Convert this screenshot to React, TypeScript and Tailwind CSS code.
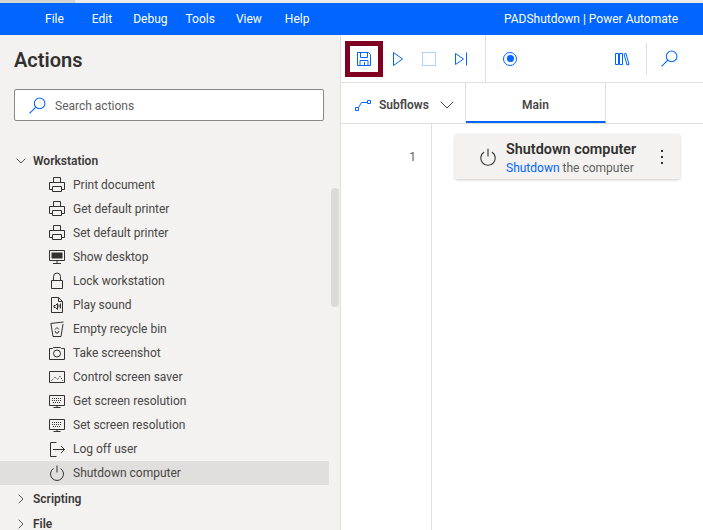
import { ReactNode } from "react";
import { ChevronDown, ChevronRight } from "lucide-react";

const Ic = ({ children }: { children: ReactNode }) => (
  <svg width="18" height="18" viewBox="0 0 18 18" fill="none" stroke="#323130" strokeWidth="1" className="shrink-0">
    {children}
  </svg>
);

const PrinterIcon = () => (
  <Ic>
    <path d="M5.500 6.500V1.500h7v5M4.500 13.500h-3v-7h15v7h-3" />
    <path d="M4.500 10.500h9v5h-9z" />
  </Ic>
);

const ScreenKeysIcon = () => (
  <Ic>
    <path d="M1.500 3.500h15v10h-15zM9 13.500v2M5.500 15.500h7" />
    <path d="M4 6.500h10M4 8.500h10M5 10.500h8" strokeDasharray="1 1" />
  </Ic>
);

const PowerIcon = ({ size = 18 }: { size?: number }) => (
  <svg width={size} height={size} viewBox="0 0 18 18" fill="none" stroke="#323130" strokeWidth="1" className="shrink-0">
    <path d="M5.500 4.500a6.500 6.500 0 1 0 7 0M9 1.500v7" />
  </svg>
);

const actions: { label: string; icon: ReactNode; active?: boolean }[] = [
  { label: "Print document", icon: <PrinterIcon /> },
  { label: "Get default printer", icon: <PrinterIcon /> },
  { label: "Set default printer", icon: <PrinterIcon /> },
  {
    label: "Show desktop",
    icon: (
      <Ic>
        <path d="M1.500 2.500h15v10h-15zM9 12.500v3M5 15.500h8" />
        <path d="M3.500 4.500h11v6h-11z" fill="#323130" stroke="none" />
      </Ic>
    ),
  },
  {
    label: "Lock workstation",
    icon: (
      <Ic>
        <path d="M3.500 8.500h11v8h-11zM5.500 8.500V4.500a3.500 3.500 0 0 1 7 0v4" />
      </Ic>
    ),
  },
  {
    label: "Play sound",
    icon: (
      <Ic>
        <path d="M3.500 1.500h7l4 4v11h-11zM10.500 1.500v4h4" />
        <path d="M6 9.500h1.500l2-2v6l-2-2H6zM11 8.500v3M12.500 7.500v5" />
      </Ic>
    ),
  },
  {
    label: "Empty recycle bin",
    icon: (
      <Ic>
        <path d="M2.500 3.500l13-1.500M3 4l2 12.500h8L15 4" />
        <path d="M7 9.500l2-2 2 2M7 11l1 2h2l1-2" />
      </Ic>
    ),
  },
  {
    label: "Take screenshot",
    icon: (
      <Ic>
        <path d="M1.500 4.500h3l1-1h7l1 1h3v11h-15z" />
        <circle cx="9" cy="9.500" r="3.500" />
      </Ic>
    ),
  },
  {
    label: "Control screen saver",
    icon: (
      <Ic>
        <path d="M1.500 3.500h15v11h-15z" />
        <path d="M3 13l4-4 2.500 2.500L12 8l3 5" strokeDasharray="1 1" />
      </Ic>
    ),
  },
  { label: "Get screen resolution", icon: <ScreenKeysIcon /> },
  { label: "Set screen resolution", icon: <ScreenKeysIcon /> },
  {
    label: "Log off user",
    icon: (
      <Ic>
        <path d="M8.500 2.500h-6v14h6M5 9.500h11.500M13 6l3.500 3.500L13 13" />
      </Ic>
    ),
  },
  { label: "Shutdown computer", icon: <PowerIcon />, active: true },
];

const Blue = ({ children, size = 16 }: { children: ReactNode; size?: number }) => (
  <svg width={size} height={size} viewBox="0 0 16 16" fill="none" stroke="#0066ff" strokeWidth="1" className="shrink-0">
    {children}
  </svg>
);

const Search = () => (
  <Blue size={17}>
    <circle cx="10" cy="6" r="5" />
    <path d="M6.500 9.500l-6 6" />
  </Blue>
);

export default function App() {
  return (
    <div className="w-[703px] h-[530px] overflow-hidden bg-white flex flex-col text-[#323130] font-['Roboto',sans-serif]">
      <div className="h-[3px] flex shrink-0">
        <div className="w-[75px] bg-[#d6d5d4]" />
        <div className="flex-1 bg-[#ebebeb]" />
      </div>
      <header className="h-[32px] shrink-0 bg-[#0066ff] text-white text-[12px] flex items-center justify-between pl-[45px] pr-[25px]">
        <nav className="flex gap-[21px]">
          <span className="mr-[7px]">File</span>
          <span>Edit</span>
          <span>Debug</span>
          <span className="-ml-[3px]">Tools</span>
          <span>View</span>
          <span className="ml-[2px]">Help</span>
        </nav>
        <span>PADShutdown | Power Automate</span>
      </header>

      <div className="flex-1 flex min-h-0">
        <aside className="w-[341px] shrink-0 bg-[#f3f2f1] border-r border-[#e1dfdd] pl-[14px] flex flex-col overflow-hidden relative">
          <h1 className="text-[20px] leading-[28px] font-semibold mt-[11px] shrink-0">Actions</h1>
          <div className="mt-[15px] w-[310px] h-[32px] shrink-0 bg-white border border-[#8a8886] rounded-[2px] flex items-center pl-[14px] gap-[9px]">
            <Search />
            <span className="text-[12px] text-[#605e5c] pt-[2px]">Search actions</span>
          </div>

          <div className="mt-[27px] -ml-[14px] text-[#484644] shrink-0">
            <div className="h-[25px] flex items-center pl-[13px] gap-[4px] text-[12px] font-semibold text-[#3b3a39]">
              <ChevronDown size={16} strokeWidth={1.3} />
              Workstation
            </div>
            <ul>
              {actions.map((a) => (
                <li
                  key={a.label}
                  className={`h-[24px] w-[329px] flex items-center pl-[48px] gap-[7px] text-[12px] ${a.active ? "bg-[#e1dfdd]" : ""}`}
                >
                  {a.icon}
                  {a.label}
                </li>
              ))}
            </ul>
            <div className="mt-[1px]">
              {["Scripting", "File"].map((g) => (
                <div key={g} className="h-[25px] flex items-center pl-[13px] gap-[4px] text-[12px] font-semibold text-[#3b3a39]">
                  <ChevronRight size={16} strokeWidth={1.3} />
                  {g}
                </div>
              ))}
            </div>
          </div>
          <div className="absolute left-[331px] top-[153px] w-[8px] h-[119px] bg-[#dcdbda] rounded-[4px]" />
        </aside>

        <main className="flex-1 flex flex-col min-w-0">
          <div className="h-[48px] shrink-0 flex items-center border-b border-[#e1dfdd] pl-[4px]">
            <div className="w-[38px] h-[36px] flex items-center justify-center border-[5px] border-[#7f0020] bg-white">
              <Blue>
                <path d="M1.500 1.500h11l2 2v11h-13zM4.500 1.500v5h7v-5M4 14.500v-5h8v5M8.500 11v3.500" />
              </Blue>
            </div>
            <div className="w-[30px] flex justify-center">
              <Blue>
                <path d="M3.500 1.500v13l9-6.500z" />
              </Blue>
            </div>
            <div className="w-[32px] flex justify-center">
              <div className="w-[14px] h-[14px] border border-[#b3d1ff]" />
            </div>
            <div className="w-[32px] flex justify-center">
              <Blue>
                <path d="M2.500 2.500v11l8-5.500zM13.500 1.500v13" />
              </Blue>
            </div>
            <div className="w-px h-[48px] bg-[#e1dfdd] ml-[8px]" />
            <div className="ml-[17px] w-[14px] h-[14px] rounded-full border border-[#0066ff] flex items-center justify-center">
              <div className="w-[7px] h-[7px] rounded-full bg-[#0066ff]" />
            </div>
            <div className="ml-auto flex items-center">
              <Blue>
                <path d="M1.500 2.500h3v11h-3zM5.500 2.500h3v11h-3zM10 3l2-.5 3 11-2 .5z" />
              </Blue>
              <div className="w-px h-[32px] bg-[#e1dfdd] ml-[16px] mr-[14px]" />
              <div className="mr-[25px]">
                <Search />
              </div>
            </div>
          </div>

          <div className="h-[41px] shrink-0 flex border-b border-[#e1dfdd] text-[12px] text-[#484644] font-semibold">
            <div className="w-[125px] flex items-center pl-[14px] pt-[3px] gap-[8px] border-r border-[#e1dfdd]">
              <Blue>
                <path d="M.500 10.500h3v3h-3zM12.500 3.500h3v3h-3zM3.500 10.500l3-5h6" />
              </Blue>
              <span>Subflows</span>
              <ChevronDown size={24} strokeWidth={1} className="-ml-[2px] shrink-0" />
            </div>
            <div className="w-[140px] pt-[5px] flex items-center justify-center border-b-[2px] border-[#0066ff] border-r border-r-[#e1dfdd]">
              Main
            </div>
          </div>

          <div className="flex-1 flex">
            <div className="w-[91px] border-r border-[#e1dfdd] text-right pr-[15px] pt-[24px] text-[12px] text-[#605e5c]">
              1
            </div>
            <div className="pl-[23px] pt-[10px]">
              <div className="w-[225px] h-[45px] bg-[#f3f2f1] rounded-[2px] shadow-[0_1px_3px_rgba(0,0,0,0.2)] flex items-center pl-[23px] pr-[17px] gap-[8px]">
                <PowerIcon size={20} />
                <div className="flex-1 pt-[4px] leading-[18px] whitespace-nowrap">
                  <div className="text-[14.400px] font-semibold">Shutdown computer</div>
                  <div className="text-[12px] text-[#605e5c]">
                    <span className="text-[#0066ff]">Shutdown</span> the computer
                  </div>
                </div>
                <div className="flex flex-col gap-[4px]">
                  <span className="w-[2px] h-[2px] bg-[#323130]" />
                  <span className="w-[2px] h-[2px] bg-[#323130]" />
                  <span className="w-[2px] h-[2px] bg-[#323130]" />
                </div>
              </div>
            </div>
          </div>
        </main>
      </div>
    </div>
  );
}
